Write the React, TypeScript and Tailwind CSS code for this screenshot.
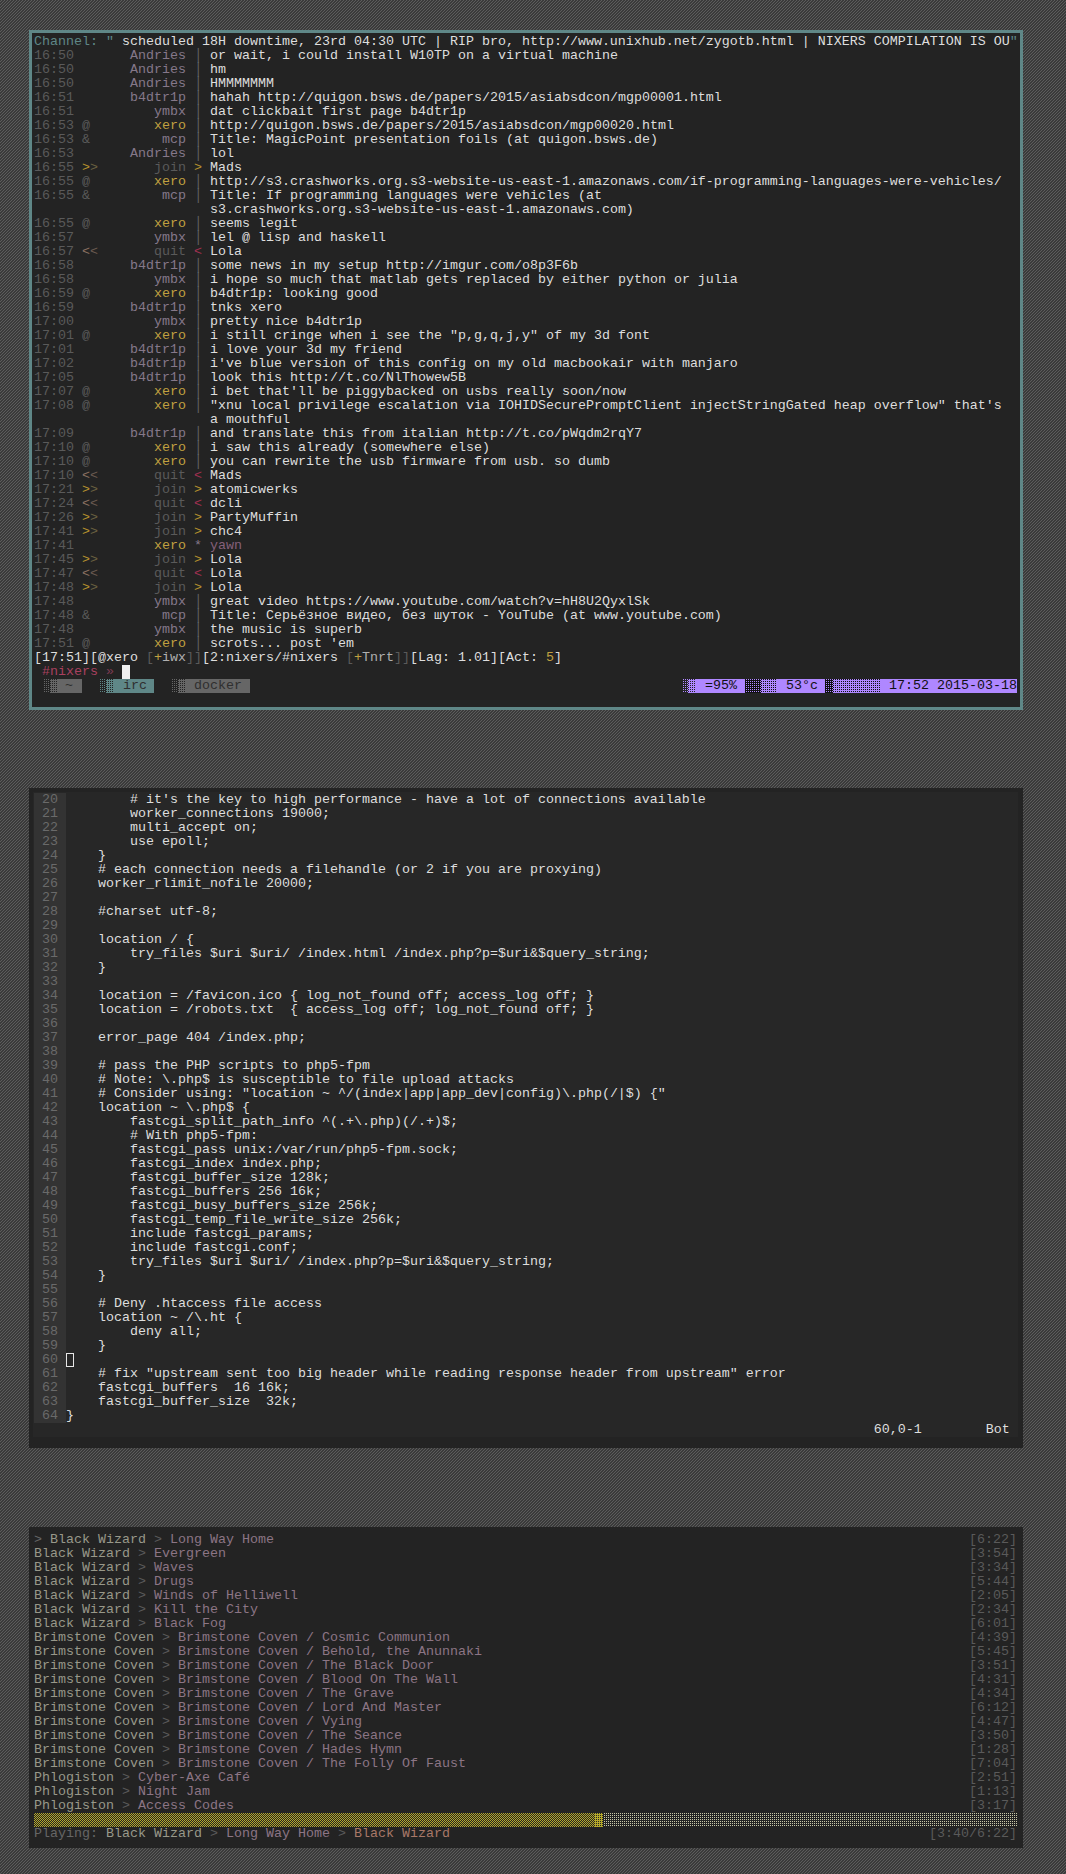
import React from "react";

const NICK = "text-[#85788a]";
const AMBER = "text-[#c0a040]";
const DIM = "text-[#5a5a5a]";
const TXT = "text-[#dedede]";

type Row = { t: string; s?: string; n?: string; m: string; k?: "join" | "quit" | "act" | "cont" };

const rows: Row[] = [
  { t: "16:50", n: "Andries", m: "or wait, i could install W10TP on a virtual machine" },
  { t: "16:50", n: "Andries", m: "hm" },
  { t: "16:50", n: "Andries", m: "HMMMMMMM" },
  { t: "16:51", n: "b4dtr1p", m: "hahah http://quigon.bsws.de/papers/2015/asiabsdcon/mgp00001.html" },
  { t: "16:51", n: "ymbx", m: "dat clickbait first page b4dtr1p" },
  { t: "16:53", s: "@", n: "xero", m: "http://quigon.bsws.de/papers/2015/asiabsdcon/mgp00020.html" },
  { t: "16:53", s: "&", n: "mcp", m: "Title: MagicPoint presentation foils (at quigon.bsws.de)" },
  { t: "16:53", n: "Andries", m: "lol" },
  { t: "16:55", k: "join", m: "Mads" },
  { t: "16:55", s: "@", n: "xero", m: "http://s3.crashworks.org.s3-website-us-east-1.amazonaws.com/if-programming-languages-were-vehicles/" },
  { t: "16:55", s: "&", n: "mcp", m: "Title: If programming languages were vehicles (at" },
  { t: "", k: "cont", m: "s3.crashworks.org.s3-website-us-east-1.amazonaws.com)" },
  { t: "16:55", s: "@", n: "xero", m: "seems legit" },
  { t: "16:57", n: "ymbx", m: "lel @ lisp and haskell" },
  { t: "16:57", k: "quit", m: "Lola" },
  { t: "16:58", n: "b4dtr1p", m: "some news in my setup http://imgur.com/o8p3F6b" },
  { t: "16:58", n: "ymbx", m: "i hope so much that matlab gets replaced by either python or julia" },
  { t: "16:59", s: "@", n: "xero", m: "b4dtr1p: looking good" },
  { t: "16:59", n: "b4dtr1p", m: "tnks xero" },
  { t: "17:00", n: "ymbx", m: "pretty nice b4dtr1p" },
  { t: "17:01", s: "@", n: "xero", m: 'i still cringe when i see the "p,g,q,j,y" of my 3d font' },
  { t: "17:01", n: "b4dtr1p", m: "i love your 3d my friend" },
  { t: "17:02", n: "b4dtr1p", m: "i've blue version of this config on my old macbookair with manjaro" },
  { t: "17:05", n: "b4dtr1p", m: "look this http://t.co/NlThowew5B" },
  { t: "17:07", s: "@", n: "xero", m: "i bet that'll be piggybacked on usbs really soon/now" },
  { t: "17:08", s: "@", n: "xero", m: '"xnu local privilege escalation via IOHIDSecurePromptClient injectStringGated heap overflow" that\'s' },
  { t: "", k: "cont", m: "a mouthful" },
  { t: "17:09", n: "b4dtr1p", m: "and translate this from italian http://t.co/pWqdm2rqY7" },
  { t: "17:10", s: "@", n: "xero", m: "i saw this already (somewhere else)" },
  { t: "17:10", s: "@", n: "xero", m: "you can rewrite the usb firmware from usb. so dumb" },
  { t: "17:10", k: "quit", m: "Mads" },
  { t: "17:21", k: "join", m: "atomicwerks" },
  { t: "17:24", k: "quit", m: "dcli" },
  { t: "17:26", k: "join", m: "PartyMuffin" },
  { t: "17:41", k: "join", m: "chc4" },
  { t: "17:41", k: "act", n: "xero", m: "yawn" },
  { t: "17:45", k: "join", m: "Lola" },
  { t: "17:47", k: "quit", m: "Lola" },
  { t: "17:48", k: "join", m: "Lola" },
  { t: "17:48", n: "ymbx", m: "great video https://www.youtube.com/watch?v=hH8U2QyxlSk" },
  { t: "17:48", s: "&", n: "mcp", m: "Title: Серьёзное видео, без шуток - YouTube (at www.youtube.com)" },
  { t: "17:48", n: "ymbx", m: "the music is superb" },
  { t: "17:51", s: "@", n: "xero", m: "scrots... post 'em" },
];

const code = [
  "        # it's the key to high performance - have a lot of connections available",
  "        worker_connections 19000;",
  "        multi_accept on;",
  "        use epoll;",
  "    }",
  "    # each connection needs a filehandle (or 2 if you are proxying)",
  "    worker_rlimit_nofile 20000;",
  "",
  "    #charset utf-8;",
  "",
  "    location / {",
  "        try_files $uri $uri/ /index.html /index.php?p=$uri&$query_string;",
  "    }",
  "",
  "    location = /favicon.ico { log_not_found off; access_log off; }",
  "    location = /robots.txt  { access_log off; log_not_found off; }",
  "",
  "    error_page 404 /index.php;",
  "",
  "    # pass the PHP scripts to php5-fpm",
  "    # Note: \\.php$ is susceptible to file upload attacks",
  '    # Consider using: "location ~ ^/(index|app|app_dev|config)\\.php(/|$) {"',
  "    location ~ \\.php$ {",
  "        fastcgi_split_path_info ^(.+\\.php)(/.+)$;",
  "        # With php5-fpm:",
  "        fastcgi_pass unix:/var/run/php5-fpm.sock;",
  "        fastcgi_index index.php;",
  "        fastcgi_buffer_size 128k;",
  "        fastcgi_buffers 256 16k;",
  "        fastcgi_busy_buffers_size 256k;",
  "        fastcgi_temp_file_write_size 256k;",
  "        include fastcgi_params;",
  "        include fastcgi.conf;",
  "        try_files $uri $uri/ /index.php?p=$uri&$query_string;",
  "    }",
  "",
  "    # Deny .htaccess file access",
  "    location ~ /\\.ht {",
  "        deny all;",
  "    }",
  "",
  '    # fix "upstream sent too big header while reading response header from upstream" error',
  "    fastcgi_buffers  16 16k;",
  "    fastcgi_buffer_size  32k;",
  "}",
];

const songs: [string, string, string, boolean?][] = [
  ["Black Wizard", "Long Way Home", "[6:22]", true],
  ["Black Wizard", "Evergreen", "[3:54]"],
  ["Black Wizard", "Waves", "[3:34]"],
  ["Black Wizard", "Drugs", "[5:44]"],
  ["Black Wizard", "Winds of Helliwell", "[2:05]"],
  ["Black Wizard", "Kill the City", "[2:34]"],
  ["Black Wizard", "Black Fog", "[6:01]"],
  ["Brimstone Coven", "Brimstone Coven / Cosmic Communion", "[4:39]"],
  ["Brimstone Coven", "Brimstone Coven / Behold, the Anunnaki", "[5:45]"],
  ["Brimstone Coven", "Brimstone Coven / The Black Door", "[3:51]"],
  ["Brimstone Coven", "Brimstone Coven / Blood On The Wall", "[4:31]"],
  ["Brimstone Coven", "Brimstone Coven / The Grave", "[4:34]"],
  ["Brimstone Coven", "Brimstone Coven / Lord And Master", "[6:12]"],
  ["Brimstone Coven", "Brimstone Coven / Vying", "[4:47]"],
  ["Brimstone Coven", "Brimstone Coven / The Seance", "[3:50]"],
  ["Brimstone Coven", "Brimstone Coven / Hades Hymn", "[1:28]"],
  ["Brimstone Coven", "Brimstone Coven / The Folly Of Faust", "[7:04]"],
  ["Phlogiston", "Cyber-Axe Café", "[2:51]"],
  ["Phlogiston", "Night Jam", "[1:13]"],
  ["Phlogiston", "Access Codes", "[3:17]"],
];

function IrcRow({ r }: { r: Row }) {
  if (r.k === "cont") {
    return <div className="h-[14px]">{" ".repeat(22)}<span className={TXT}>{r.m}</span></div>;
  }
  const name = r.k === "join" ? "join" : r.k === "quit" ? "quit" : r.n!;
  const isEvent = r.k === "join" || r.k === "quit";
  const nickCls = isEvent ? DIM : name === "xero" ? AMBER : NICK;
  return (
    <div className="h-[14px]">
      <span className={DIM}>{r.t}</span>
      {" "}
      {r.k === "join" ? (
        <span><span className="text-[#b5912e]">{">"}</span><span className="text-[#6a6040]">{">"}</span></span>
      ) : r.k === "quit" ? (
        <span><span className="text-[#8a7060]">{"<"}</span><span className="text-[#6a5a50]">{"<"}</span></span>
      ) : (
        <span className={DIM}>{(r.s ?? "").padEnd(2)}</span>
      )}
      <span className={nickCls}>{name.padStart(11)}</span>
      {" "}
      {r.k === "join" ? (
        <span className="text-[#b5912e]">{">"}</span>
      ) : r.k === "quit" ? (
        <span className="text-[#a03050]">{"<"}</span>
      ) : r.k === "act" ? (
        <span className="text-[#85788a]">*</span>
      ) : (
        <span className="text-[#666666]">│</span>
      )}
      {" "}
      <span className={r.k === "act" ? "text-[#85607a]" : TXT}>{r.m}</span>
    </div>
  );
}

function Grey({ w, text, pl, bg, sparse, dense }: { w: string; text: string; pl: string; bg: string; sparse: string; dense: string }) {
  return (
    <div className="flex h-[14px]">
      <div className={`w-[7px] bg-[length:2px_2px] ${sparse}`} />
      <div className={`w-[7px] bg-[length:2px_2px] ${dense}`} />
      <div className={`${w} ${pl} ${bg} text-[#2f2f2f] leading-[14px]`}>{text}</div>
    </div>
  );
}

export default function App() {
  return (
    <div className="w-[1066px] h-[1874px] pl-[29px] pt-[30px] overflow-hidden bg-[linear-gradient(135deg,#3a3a3a_25%,#5c5c5c_25%,#5c5c5c_50%,#3a3a3a_50%,#3a3a3a_75%,#5c5c5c_75%)] bg-[length:3px_3px] font-['Liberation_Mono',monospace] text-[13.33px] leading-[14px] whitespace-pre">
      {/* irc */}
      <div className="w-[994px] h-[680px] border-[3px] border-[#5f8787] bg-[#232323] pl-[2px] pt-[2px] overflow-hidden">
        <div className="h-[14px] text-[#5f8787]">
          Channel: " <span className={TXT}>scheduled 18H downtime, 23rd 04:30 UTC | RIP bro, http://www.unixhub.net/zygotb.html | NIXERS COMPILATION IS OU</span>"
        </div>
        {rows.map((r, i) => <IrcRow key={i} r={r} />)}
        <div className={`h-[14px] ${TXT}`}>
          [17:51][@xero <span className={DIM}>[</span><span className="text-[#c0a040]">+</span><span className="text-[#b0b0b0]">iwx</span><span className={DIM}>]]</span>[2:nixers/#nixers <span className={DIM}>[</span><span className="text-[#c0a040]">+</span><span className="text-[#b0b0b0]">Tnrt</span><span className={DIM}>]]</span>[Lag: 1.01][Act: <span className="text-[#c0a040]">5</span>]
        </div>
        <div className="h-[14px] flex">
          <span className="text-[#a8405f]"> #nixers </span>
          <span className="text-[#7a3a50]">» </span>
          <span className="w-[8px] h-[14px] bg-[#f0f0f0]" />
        </div>
        <div className="h-[14px] flex justify-between pl-[9px] pr-[3px]">
          <div className="flex">
            <Grey w="w-[25px]" text="~" pl="pl-[8px]" bg="bg-[#666666]" sparse="bg-[conic-gradient(#666666_25%,transparent_0)]" dense="bg-[conic-gradient(#666666_75%,transparent_0)]" />
            <div className="w-[17px]" />
            <Grey w="w-[41px]" text="irc" pl="pl-[10px]" bg="bg-[#5f8787]" sparse="bg-[conic-gradient(#5f8787_25%,transparent_0)]" dense="bg-[conic-gradient(#5f8787_75%,transparent_0)]" />
            <div className="w-[17px]" />
            <Grey w="w-[65px]" text="docker" pl="pl-[9px]" bg="bg-[#666666]" sparse="bg-[conic-gradient(#666666_25%,transparent_0)]" dense="bg-[conic-gradient(#666666_75%,transparent_0)]" />
          </div>
          <div className="flex text-[#111111]">
            <div className="w-[6px] bg-[length:2px_2px] bg-[conic-gradient(#af87ff_25%,transparent_0)]" />
            <div className="w-[8px] bg-[length:2px_2px] bg-[conic-gradient(#af87ff_75%,transparent_0)]" />
            <div className="w-[49px] pl-[9px] bg-[#af87ff]">=95%</div>
            <div className="w-[16px] bg-[#111111] bg-[length:2px_2px] bg-[conic-gradient(#af87ff_25%,transparent_0)]" />
            <div className="w-[16px] bg-[#111111] bg-[length:2px_2px] bg-[conic-gradient(#af87ff_75%,transparent_0)]" />
            <div className="w-[48px] pl-[9px] bg-[#af87ff]">53°c</div>
            <div className="w-[8px] bg-[#111111] bg-[length:2px_2px] bg-[conic-gradient(#af87ff_25%,transparent_0)]" />
            <div className="w-[47px] bg-[#111111] bg-[length:2px_2px] bg-[conic-gradient(#af87ff_75%,transparent_0)]" />
            <div className="w-[137px] pl-[9px] bg-[#af87ff]">17:52 2015-03-18</div>
          </div>
        </div>
      </div>

      {/* vim */}
      <div className="w-[994px] h-[660px] mt-[78px] bg-[#232323] pl-[4px] pr-[5px] pt-[4px] pb-[11px]">
        <div className="h-full bg-[#272727] pl-px pt-px text-[#dedede]">
          {code.map((l, i) => (
            <div key={i} className="h-[14px] flex">
              <span className="w-[32px] bg-[#333333] text-[#6a6a6a]">{String(i + 20).padStart(3)} </span>
              {i + 20 === 60 ? <span className="w-[8px] h-[14px] border border-[#e6e6e6]" /> : <span>{l}</span>}
            </div>
          ))}
          <div className="h-[14px]">{" ".repeat(105)}60,0-1{" ".repeat(8)}Bot</div>
        </div>
      </div>

      {/* mocp */}
      <div className="w-[994px] h-[321px] mt-[79px] bg-[#232323] pl-[5px] pr-[6px] pt-[6px]">
        {songs.map(([a, s, d, sel], i) => (
          <div key={i} className="h-[14px] flex justify-between">
            <span>
              {sel && <span className="text-[#666666]">{">"} </span>}
              <span className="text-[#98988a]">{a}</span>
              <span className="text-[#5a5a5a]"> {">"} </span>
              <span className="text-[#8c7585]">{s}</span>
            </span>
            <span className="text-[#5a5a5a]">{d}</span>
          </div>
        ))}
        <div className="h-[14px] flex">
          <div className="w-[560px] bg-[length:2px_2px] bg-[conic-gradient(#b5a92a_25%,transparent_0_50%,#b5a92a_0_75%,transparent_0)]" />
          <div className="w-[9px] bg-[length:2px_2px] bg-[conic-gradient(#b5a92a_75%,transparent_0)]" />
          <div className="flex-1 bg-[length:2px_2px] bg-[conic-gradient(#c8c8a8_25%,transparent_0)]" />
        </div>
        <div className="h-[14px] flex justify-between">
          <span>
            <span className="text-[#666666]">Playing: </span>
            <span className="text-[#98988a]">Black Wizard</span>
            <span className="text-[#5a5a5a]"> {">"} </span>
            <span className="text-[#8c7585]">Long Way Home</span>
            <span className="text-[#5a5a5a]"> {">"} </span>
            <span className="text-[#a87868]">Black Wizard</span>
          </span>
          <span className="text-[#5a5a5a]">[3:40/6:22]</span>
        </div>
      </div>
    </div>
  );
}
